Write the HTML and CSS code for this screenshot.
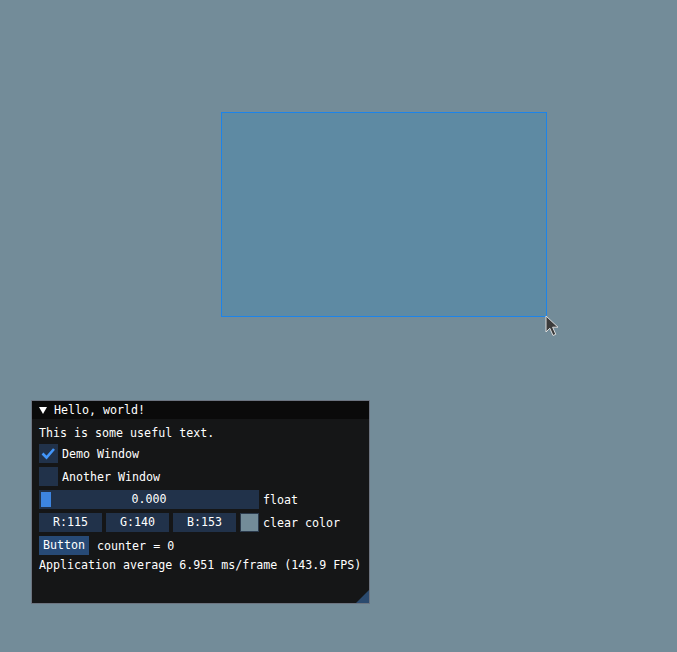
FILE: index.html
```html
<!DOCTYPE html>
<html lang="en">
<head>
  <meta charset="UTF-8">
  <title>Hello, world!</title>
  <link rel="stylesheet" href="styles.css">
</head>
<body>

  <div class="selection"></div>

  <svg class="cursor" width="15" height="22" viewBox="0 0 15 22">
    <path d="M1 1 L1 17 L4.8 13.2 L8 20.5 L10.8 19.3 L7.6 12.2 L13 12.2 Z" fill="#3c3c3c" stroke="#dcdcdc" stroke-width="1"/>
  </svg>

  <div class="window">
    <div class="titlebar">
      <span class="arrow"></span>
      <span>Hello, world!</span>
    </div>
    <div class="content">
      <div class="line">This is some useful text.</div>

      <div class="row">
        <span class="frame check">
          <svg width="19" height="19" viewBox="0 0 19 19">
            <polyline points="3.5,9.5 7.5,13.5 15,5" fill="none" stroke="#4296fa" stroke-width="2.6"/>
          </svg>
        </span>
        <span class="label">Demo Window</span>
      </div>

      <div class="row">
        <span class="frame check"></span>
        <span class="label">Another Window</span>
      </div>

      <div class="row">
        <span class="frame slider">
          <span class="grab"></span>
          <span>0.000</span>
        </span>
        <span class="label">float</span>
      </div>

      <div class="row">
        <span class="frame drag">R:115</span>
        <span class="frame drag">G:140</span>
        <span class="frame drag">B:153</span>
        <span class="swatch"></span>
        <span class="label">clear color</span>
      </div>

      <div class="row wide">
        <span class="button">Button</span>
        <span>counter = 0</span>
      </div>

      <div class="line">Application average 6.951 ms/frame (143.9 FPS)</div>
    </div>
    <span class="grip"></span>
  </div>

</body>
</html>
```

FILE: styles.css
```css
body {
  margin: 0;
  width: 677px;
  height: 652px;
  overflow: hidden;
  background-color: #738c99;
  font-family: 'DejaVu Sans Mono', monospace;
  font-size: 11.65px;
  color: #ffffff;
  position: relative;
}
.selection {
  position: absolute;
  left: 221px;
  top: 112px;
  width: 324px;
  height: 203px;
  border: 1px solid #1c84ea;
  background-color: #5e8aa3;
}
.cursor {
  position: absolute;
  left: 545px;
  top: 315px;
}
.window {
  position: absolute;
  left: 31px;
  top: 400px;
  width: 337px;
  height: 202px;
  border: 1px solid #6c7480;
  background-color: #151617;
}
.titlebar {
  height: 18px;
  background-color: #0a0a0a;
  display: flex;
  align-items: center;
  padding-left: 7px;
  gap: 7px;
  line-height: 13px;
}
.arrow {
  width: 0;
  height: 0;
  border-left: 4px solid transparent;
  border-right: 4px solid transparent;
  border-top: 7px solid #ffffff;
}
.content {
  padding: 8px 7px;
  display: flex;
  flex-direction: column;
  gap: 4px;
}
.line {
  height: 13px;
  line-height: 13px;
  white-space: nowrap;
}
.row {
  display: flex;
  align-items: center;
  gap: 4px;
  height: 19px;
  white-space: nowrap;
}
.row.wide {
  gap: 8px;
}
.frame {
  height: 19px;
  background-color: #21324a;
  display: flex;
  align-items: center;
  justify-content: center;
  line-height: 13px;
}
.check {
  width: 19px;
}
.check svg {
  display: block;
}
.slider {
  width: 220px;
  position: relative;
}
.grab {
  position: absolute;
  left: 2px;
  top: 2px;
  width: 10px;
  height: 15px;
  background-color: #3d85e0;
}
.drag {
  width: 63px;
}
.swatch {
  width: 17px;
  height: 17px;
  background-color: #738c99;
  border: 1px solid #2b3a4c;
}
.button {
  height: 19px;
  padding: 0 4px;
  background-color: #274a76;
  display: flex;
  align-items: center;
  line-height: 13px;
}
.grip {
  position: absolute;
  right: 0;
  bottom: 0;
  width: 13px;
  height: 13px;
  background-color: #2b4a6e;
  clip-path: polygon(100% 0, 100% 100%, 0 100%);
}
```
